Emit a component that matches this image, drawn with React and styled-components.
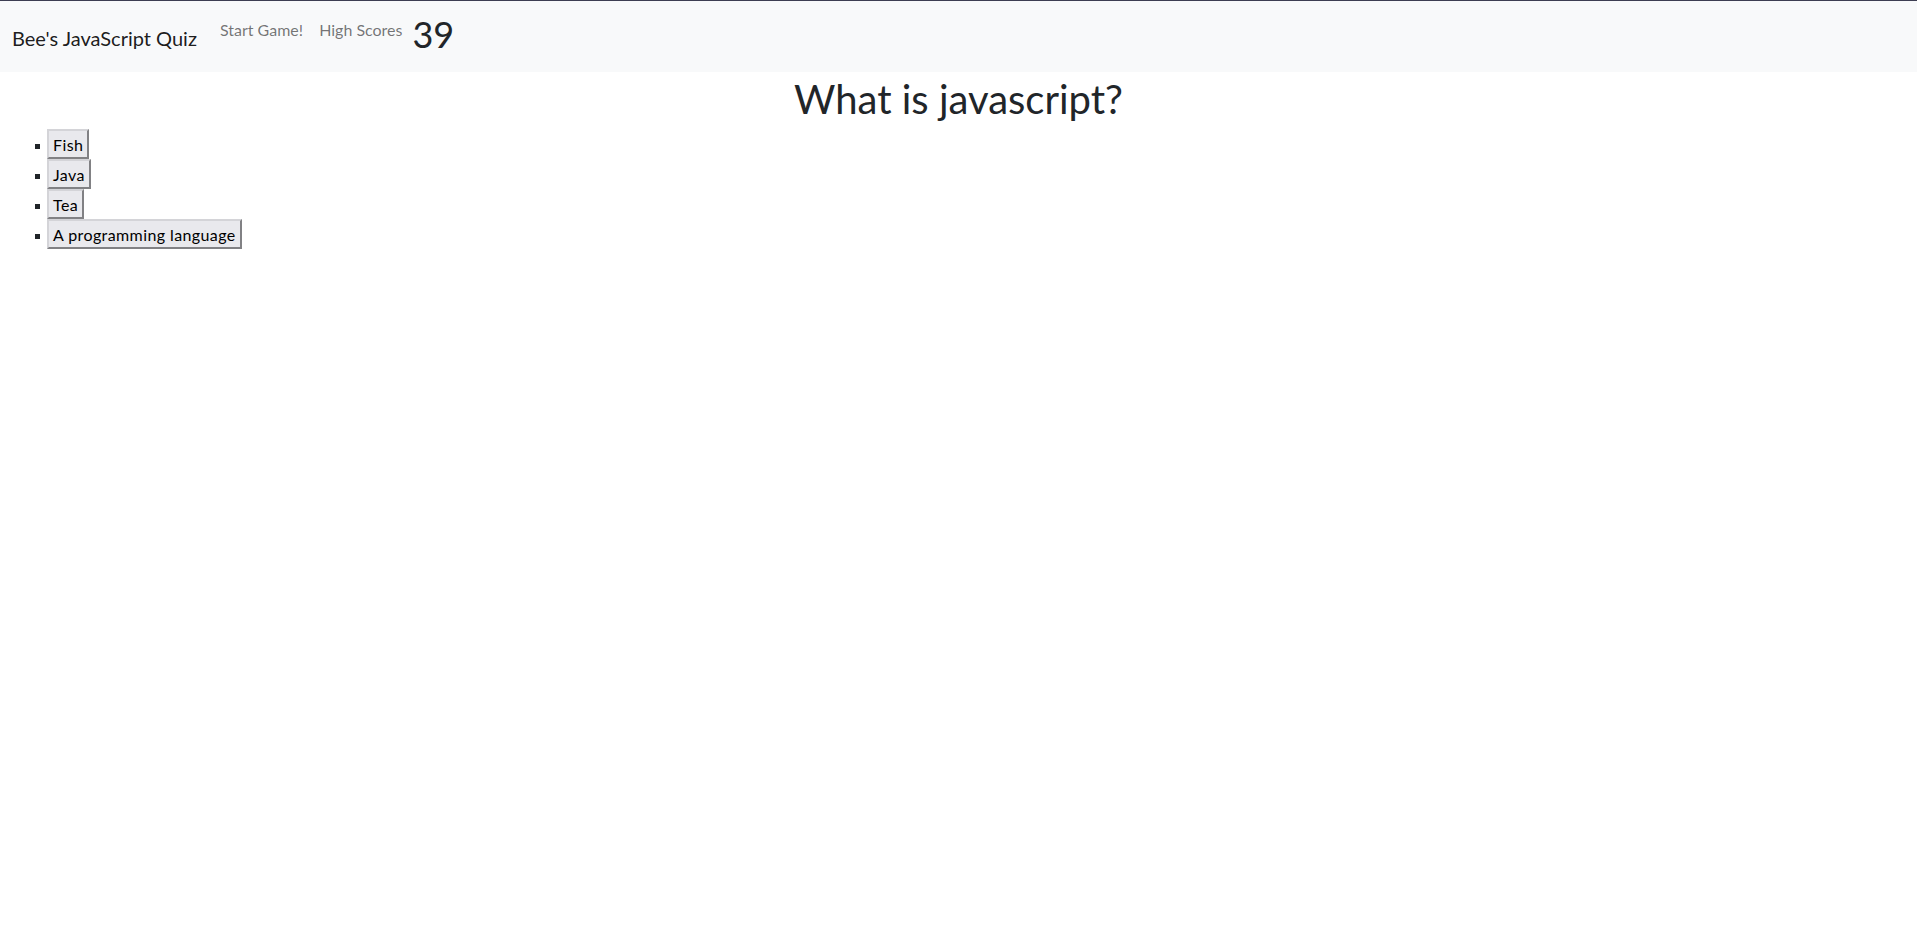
import React from 'react'
import styled, { createGlobalStyle } from 'styled-components'

const answers = ['Fish', 'Java', 'Tea', 'A programming language']

const GlobalStyle = createGlobalStyle`
   body {
      margin: 0;
      font-family: 'Lato', 'Liberation Sans', sans-serif;
      font-size: 16px;
      line-height: 1.5;
      color: #212529;
      background: #ffffff;
   }
`

const App = () => {
   return (
      <>
         <GlobalStyle />
         <Navbar>
            <Brand href="#">Bee's JavaScript Quiz</Brand>
            <NavLinks>
               <NavLink href="#">Start Game!</NavLink>
               <NavLink href="#">High Scores</NavLink>
            </NavLinks>
            <Timer>39</Timer>
         </Navbar>
         <Question>What is javascript?</Question>
         <AnswerList>
            {answers.map((answer) => (
               <AnswerItem key={answer}>
                  <AnswerButton>{answer}</AnswerButton>
               </AnswerItem>
            ))}
         </AnswerList>
      </>
   )
}

export default App

const Navbar = styled.nav`
   display: flex;
   align-items: flex-start;
   height: 71px;
   border-top: 1px solid #3d3d52;
   background: #f8f9fa;
   padding: 0 12px;
   box-sizing: content-box;
`
const Brand = styled.a`
   font-size: 20px;
   line-height: 30px;
   margin-top: 22px;
   color: rgba(0, 0, 0, 0.9);
   text-decoration: none;
   white-space: nowrap;
`
const NavLinks = styled.div`
   display: flex;
   gap: 16px;
   margin-left: 23px;
   margin-top: 17px;
`
const NavLink = styled.a`
   font-size: 16px;
   line-height: 24px;
   color: rgba(0, 0, 0, 0.55);
   text-decoration: none;
   white-space: nowrap;
`
const Timer = styled.span`
   font-size: 36px;
   line-height: 43px;
   margin-left: 10px;
   margin-top: 12px;
   color: #212529;
`
const Question = styled.h1`
   margin: 3px 0 6px;
   font-size: 40px;
   font-weight: 400;
   line-height: 48px;
   text-align: center;
`
const AnswerList = styled.ul`
   margin: 0;
   padding-left: 35px;
   list-style: none;
`
const AnswerItem = styled.li`
   display: flex;
   align-items: center;
   gap: 7px;
   &::before {
      content: '';
      width: 5px;
      height: 5px;
      margin-top: 5px;
      background: #212529;
   }
`
const AnswerButton = styled.button`
   margin: 0;
   padding: 3px 4px 2px;
   font-family: 'Lato', 'Liberation Sans', sans-serif;
   font-size: 16px;
   line-height: 21px;
   letter-spacing: 0.4px;
   color: #000000;
   background: #e9e9ed;
   border: 2px outset #d4d4d8;
   border-radius: 0;
`
